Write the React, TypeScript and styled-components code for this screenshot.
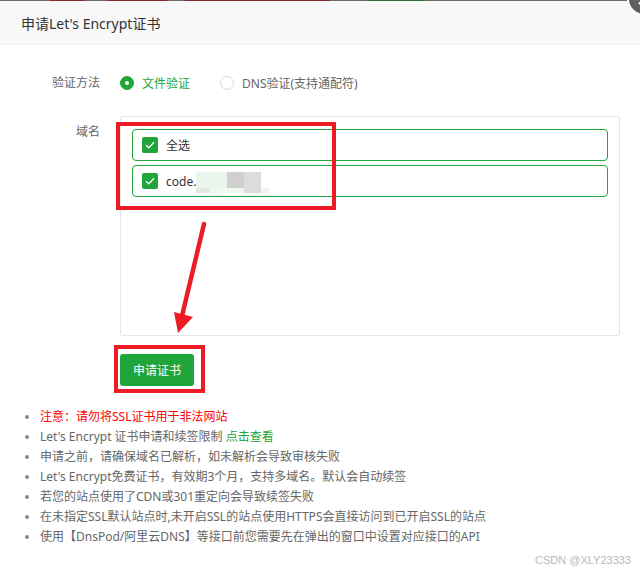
import React from "react";
import styled, { createGlobalStyle } from "styled-components";

const GlobalStyle = createGlobalStyle`
  html, body {
    margin: 0;
    padding: 0;
    background: #fff;
  }
  body {
    font-family: "Noto Sans", "Noto Sans CJK SC", sans-serif;
  }
`;

const green = "#20a53a";

const Page = styled.div`
  position: relative;
  width: 640px;
  height: 571px;
  overflow: hidden;
  background: #fff;
`;

// thin strip of the page behind the dialog
const BackStrip = styled.div`
  height: 1px;
  background: linear-gradient(
    to right,
    #6e6868 0,
    #6e6868 50px,
    #8a2a2a 50px,
    #8a2a2a 85px,
    #6e6868 85px,
    #6e6868 107px,
    #8a2a2a 107px,
    #8a2a2a 167px,
    #6e6868 167px,
    #6e6868 185px,
    #8a2a2a 185px,
    #8a2a2a 330px,
    #6e6868 330px,
    #6e6868 367px,
    #2f6a35 367px,
    #2f6a35 425px,
    #6e6868 425px
  );
`;

const Header = styled.div`
  height: 43px;
  padding-left: 21px;
  background: #f8f8f8;
  border-bottom: 1px solid #eee;
  display: flex;
  align-items: center;
  font-size: 14px;
  color: #333;
`;

const CloseBtn = styled.div`
  position: absolute;
  left: 627px;
  top: -18px;
  width: 30px;
  height: 30px;
  border-radius: 50%;
  background: #5f5f5f;
  border: 2px solid #fff;
  display: flex;
  align-items: center;
  justify-content: center;
`;

const Body = styled.div`
  padding-top: 22px;
`;

const FormRow = styled.div<{ $gap?: number }>`
  display: flex;
  align-items: flex-start;
  margin-bottom: ${(p) => p.$gap ?? 17}px;
`;

const Label = styled.div`
  width: 100px;
  margin-right: 20px;
  text-align: right;
  line-height: 32px;
  font-size: 12px;
  color: #666;
`;

const RadioGroup = styled.div`
  display: flex;
  align-items: center;
  height: 32px;
`;

const RadioItem = styled.label<{ $checked?: boolean }>`
  display: flex;
  align-items: center;
  gap: 8px;
  margin-right: 30px;
  font-size: 12px;
  color: ${(p) => (p.$checked ? green : "#666")};
`;

const RadioDot = styled.span<{ $checked?: boolean }>`
  width: 14px;
  height: 14px;
  box-sizing: border-box;
  border-radius: 50%;
  display: flex;
  align-items: center;
  justify-content: center;
  background: ${(p) => (p.$checked ? green : "#fff")};
  border: 1px solid ${(p) => (p.$checked ? green : "#d9d9d9")};
  &::after {
    content: "";
    width: 4px;
    height: 4px;
    border-radius: 50%;
    background: #fff;
    display: ${(p) => (p.$checked ? "block" : "none")};
  }
`;

const DomainBox = styled.div`
  width: 500px;
  height: 220px;
  box-sizing: border-box;
  border: 1px solid #e6e6e6;
  border-radius: 2px;
  padding: 12px 11px;
  display: flex;
  flex-direction: column;
  gap: 4px;
`;

const DomainItem = styled.div`
  height: 32px;
  box-sizing: border-box;
  border: 1px solid ${green};
  border-radius: 4px;
  display: flex;
  align-items: center;
  gap: 8px;
  padding-left: 9px;
  font-size: 12px;
  color: #333;
`;

const CheckBox = styled.span`
  width: 16px;
  height: 16px;
  border-radius: 2px;
  background: ${green};
  display: flex;
  align-items: center;
  justify-content: center;
`;

const DomainText = styled.span`
  display: flex;
  align-items: center;
`;

// blurred (mosaic) part of the domain name
const Mosaic = styled.span`
  display: grid;
  grid-template-columns: 14px 17px 17px 17px 8px;
  grid-template-rows: 16px 5px;
  margin-top: 3px;
`;

const Tile = styled.span<{ $c: string }>`
  background: ${(p) => p.$c};
`;

const Submit = styled.button`
  margin-left: 120px;
  width: 74px;
  height: 32px;
  border: none;
  border-radius: 3px;
  background: ${green};
  color: #fff;
  font-family: inherit;
  font-size: 12px;
  padding: 0;
`;

const Tips = styled.ul`
  list-style: none;
  margin: 21px 0 0;
  padding: 0 0 0 40px;
`;

const Tip = styled.li<{ $red?: boolean }>`
  position: relative;
  font-size: 12px;
  line-height: 20px;
  color: ${(p) => (p.$red ? "#f00" : "#666")};
  &::before {
    content: "";
    position: absolute;
    left: -15px;
    top: 8px;
    width: 4px;
    height: 4px;
    border-radius: 50%;
    background: #888;
  }
`;

const Link = styled.a`
  color: ${green};
  text-decoration: none;
`;

const Watermark = styled.div`
  position: absolute;
  right: 9px;
  bottom: 5px;
  font-family: "Liberation Sans", sans-serif;
  font-size: 11px;
  color: #b8b8b8;
`;

const Annotations = styled.svg`
  position: absolute;
  left: 0;
  top: 0;
  pointer-events: none;
`;

const Check = () => (
  <svg width="10" height="8" viewBox="0 0 10 8">
    <path d="M1 4.2 L3.8 6.8 L9 1.2" fill="none" stroke="#fff" strokeWidth="1.3" />
  </svg>
);

const mosaic = [
  "#eaf5ec", "#eaf5ec", "#cfcfcf", "#dcdcdc", "#fff",
  "#e6e6e6", "#eef7f0", "#eef7f0", "#dcdcdc", "#eaf5ec",
];

const tips = [
  "申请之前，请确保域名已解析，如未解析会导致审核失败",
  "Let's Encrypt免费证书，有效期3个月，支持多域名。默认会自动续签",
  "若您的站点使用了CDN或301重定向会导致续签失败",
  "在未指定SSL默认站点时,未开启SSL的站点使用HTTPS会直接访问到已开启SSL的站点",
  "使用【DnsPod/阿里云DNS】等接口前您需要先在弹出的窗口中设置对应接口的API",
];

const App = () => {
  return (
    <Page>
      <GlobalStyle />
      <BackStrip />
      <Header>申请Let's Encrypt证书</Header>
      <CloseBtn>
        <svg width="14" height="14" viewBox="0 0 14 14">
          <path d="M2 2 L12 12 M12 2 L2 12" stroke="#fff" strokeWidth="2" />
        </svg>
      </CloseBtn>

      <Body>
        <FormRow>
          <Label>验证方法</Label>
          <RadioGroup>
            <RadioItem $checked>
              <RadioDot $checked />
              文件验证
            </RadioItem>
            <RadioItem>
              <RadioDot />
              DNS验证(支持通配符)
            </RadioItem>
          </RadioGroup>
        </FormRow>

        <FormRow $gap={18}>
          <Label>域名</Label>
          <DomainBox>
            <DomainItem>
              <CheckBox>
                <Check />
              </CheckBox>
              全选
            </DomainItem>
            <DomainItem>
              <CheckBox>
                <Check />
              </CheckBox>
              <DomainText>
                code.
                <Mosaic>
                  {mosaic.map((c, i) => (
                    <Tile key={i} $c={c} />
                  ))}
                </Mosaic>
              </DomainText>
            </DomainItem>
          </DomainBox>
        </FormRow>

        <Submit>申请证书</Submit>

        <Tips>
          <Tip $red>注意：请勿将SSL证书用于非法网站</Tip>
          <Tip>
            Let's Encrypt 证书申请和续签限制 <Link>点击查看</Link>
          </Tip>
          {tips.map((t) => (
            <Tip key={t}>{t}</Tip>
          ))}
        </Tips>
      </Body>

      <Watermark>CSDN @XLY23333</Watermark>

      <Annotations width="640" height="571" viewBox="0 0 640 571">
        <rect x="118" y="124" width="216" height="84" fill="none" stroke="#ed1c24" strokeWidth="4" />
        <rect x="116" y="347" width="87" height="44" fill="none" stroke="#ed1c24" strokeWidth="4" />
        <line x1="204" y1="224" x2="182" y2="316" stroke="#ed1c24" strokeWidth="4.5" strokeLinecap="round" />
        <polygon points="174,312 193,317 178,333" fill="#ed1c24" />
      </Annotations>
    </Page>
  );
};

export default App;
